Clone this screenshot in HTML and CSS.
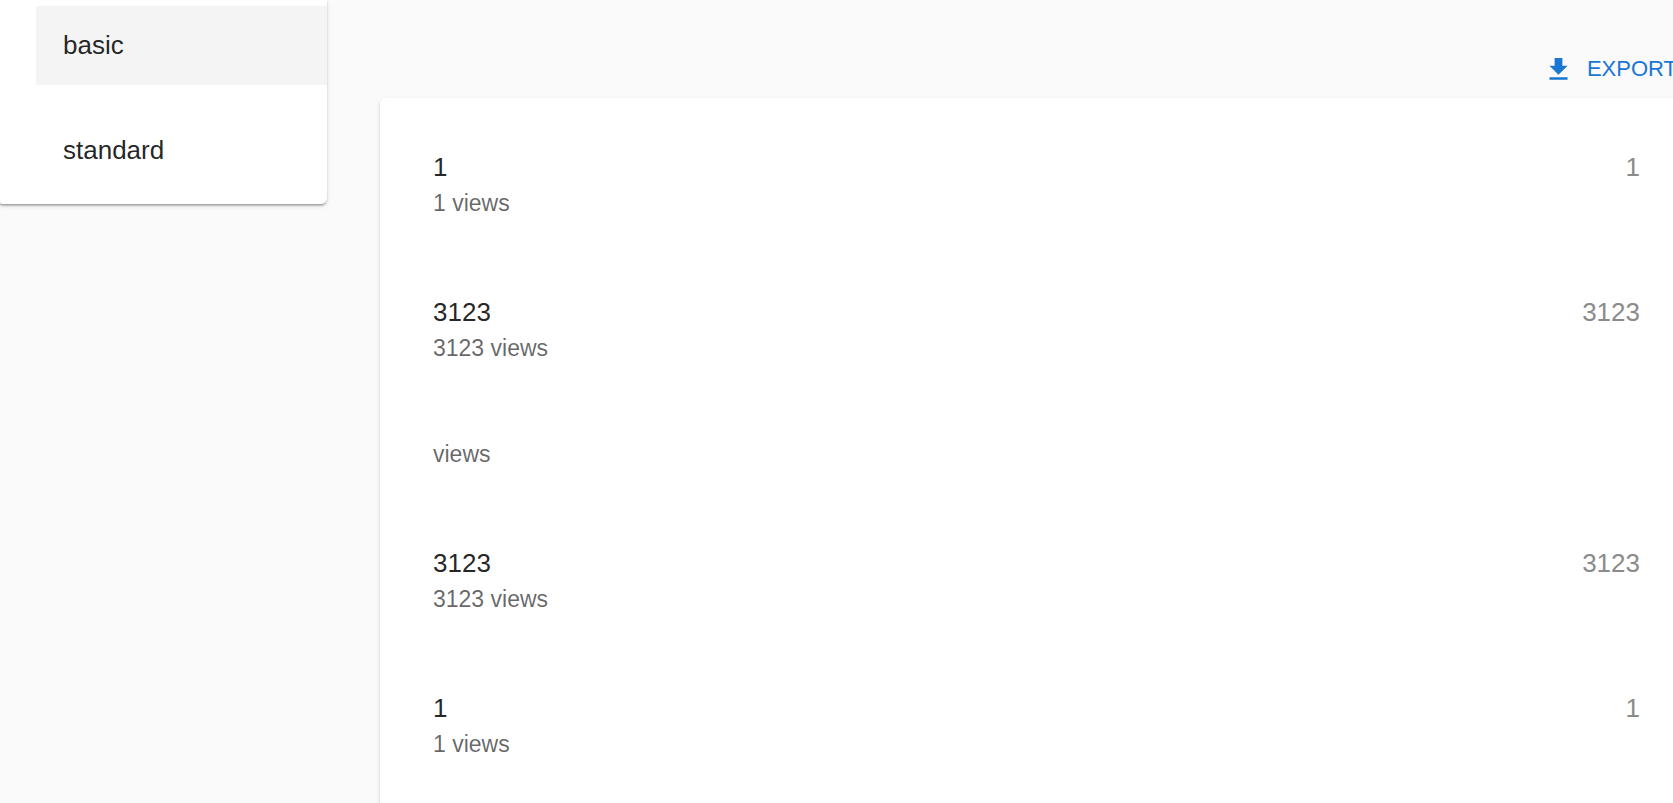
FILE: index.html
```html
<!DOCTYPE html>
<html lang="en">

<head>
    <meta charset="UTF-8">
    <meta name="viewport" content="width=device-width, initial-scale=1">
    <title>Views</title>
    <link rel="stylesheet" href="styles.css">
</head>

<body>

    <div class="layout">
        <nav class="sidebar">
            <a class="filter active" href="#basic">basic</a>
            <a class="filter" href="#standard">standard</a>
        </nav>

        <main class="content">
            <div class="toolbar">
                <button type="button" class="export">
                    <svg class="icon" viewBox="0 0 24 24" aria-hidden="true">
                        <path d="M19 9h-4V3H9v6H5l7 7 7-7zM5 18v2h14v-2H5z" />
                    </svg>
                    Export
                </button>
            </div>

            <ul class="list">
                <li class="row">
                    <div>
                        <div class="primary">1</div>
                        <div class="secondary">1 views</div>
                    </div>
                    <span class="tertiary">1</span>
                </li>
                <li class="row">
                    <div>
                        <div class="primary">3123</div>
                        <div class="secondary">3123 views</div>
                    </div>
                    <span class="tertiary">3123</span>
                </li>
                <li class="row">
                    <div>
                        <div class="secondary">views</div>
                    </div>
                </li>
                <li class="row">
                    <div>
                        <div class="primary">3123</div>
                        <div class="secondary">3123 views</div>
                    </div>
                    <span class="tertiary">3123</span>
                </li>
                <li class="row">
                    <div>
                        <div class="primary">1</div>
                        <div class="secondary">1 views</div>
                    </div>
                    <span class="tertiary">1</span>
                </li>
            </ul>
        </main>
    </div>

</body>

</html>
```
FILE: styles.css
```css
* {
    box-sizing: border-box;
}

body {
    margin: 0;
    height: 100vh;
    overflow: hidden;
    background-color: #fafafa;
    color: rgba(0, 0, 0, 0.87);
    font-family: "Liberation Sans", Arial, sans-serif;
    font-size: 26px;
    line-height: 39px;
}

/* the page runs a little past both sides of the window */
.layout {
    display: flex;
    align-items: flex-start;
    gap: 53px;
    margin: 0 -13px 0 -3px;
}

.sidebar,
.list {
    background-color: #fff;
    box-shadow: 0 3px 2px -2px rgba(0, 0, 0, 0.2),
        0 2px 2px 0 rgba(0, 0, 0, 0.14),
        0 2px 5px 0 rgba(0, 0, 0, 0.12);
}

.sidebar {
    display: flex;
    flex-direction: column;
    gap: 26px;
    flex: 0 0 330px;
    padding: 6px 0 14px 39px;
    border-radius: 0 0 6px 6px;
}

.filter {
    padding: 20px 27px;
    color: inherit;
    text-decoration: none;
}

.filter.active {
    background-color: #f4f4f4;
}

.content {
    flex: 1;
    min-width: 0;
}

.toolbar {
    display: flex;
    justify-content: flex-end;
    padding: 53px 9px 13px;
}

.export {
    display: flex;
    align-items: center;
    gap: 13px;
    height: 32px;
    padding: 0;
    border: none;
    background: none;
    color: #1976d2;
    font-family: inherit;
    font-size: 22px;
    text-transform: uppercase;
    cursor: pointer;
}

.icon {
    width: 31px;
    height: 31px;
    fill: currentColor;
}

.list {
    margin: 0;
    padding: 14px 0;
    border-radius: 6px;
    list-style: none;
}

.row {
    display: flex;
    justify-content: space-between;
    padding: 36px 46px 38px 53px;
}

.secondary {
    color: rgba(0, 0, 0, 0.6);
    font-size: 23px;
    line-height: 32px;
}

.tertiary {
    color: #8b8b8b;
}
```
